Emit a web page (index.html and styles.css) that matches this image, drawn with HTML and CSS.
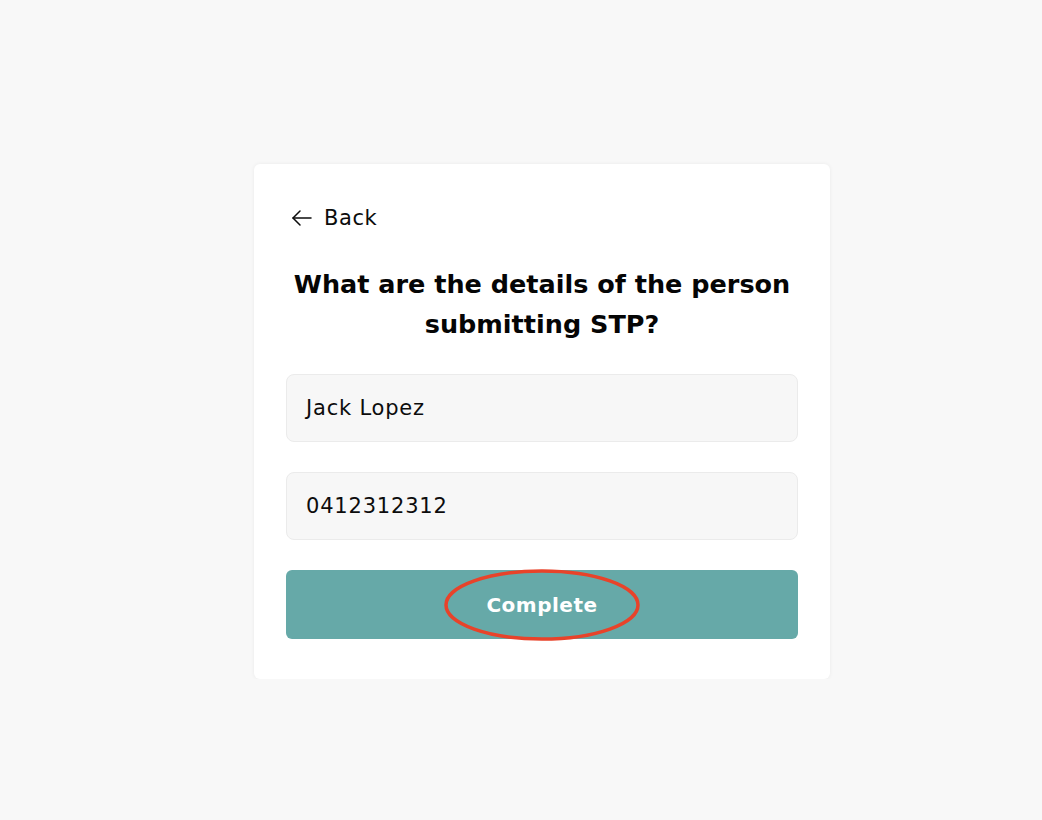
FILE: index.html
```html
<!DOCTYPE html>
<html lang="en">
<head>
<meta charset="utf-8">
<title>STP details</title>
<link rel="stylesheet" href="styles.css">
</head>
<body>
<main class="page">
  <section class="card">
    <a class="back" href="#">
      <svg class="back-icon" viewBox="0 0 24 24" width="24" height="24" fill="none" stroke="currentColor" stroke-width="1.5" stroke-linecap="round" stroke-linejoin="round"><path d="M21 12H3"/><path d="M10 5l-7 7 7 7"/></svg>
      <span>Back</span>
    </a>
    <h1 class="title">What are the details of the person submitting STP?</h1>
    <div class="field">Jack Lopez</div>
    <div class="field">0412312312</div>
    <div class="btn-wrap">
      <button class="btn">Complete</button>
      <svg class="annot" viewBox="0 0 200 76" width="200" height="76"><ellipse cx="100" cy="38" rx="96" ry="34" fill="none" stroke="#e8432a" stroke-width="3.5"/></svg>
    </div>
  </section>
</main>
</body>
</html>
```
FILE: styles.css
```css
html, body {
  margin: 0;
  padding: 0;
  background: #f8f8f8;
}
body {
  font-family: "DejaVu Sans", "Noto Sans", sans-serif;
  color: #0c0c0c;
}
.page {
  display: flex;
  justify-content: flex-start;
  padding: 164px 0 0 254px;
}
.card {
  box-sizing: border-box;
  width: 576px;
  background: #ffffff;
  border-radius: 6px;
  box-shadow: 0 0 4px rgba(0,0,0,0.06);
  padding: 40px 32px 40px 32px;
  display: flex;
  flex-direction: column;
}
.back {
  display: flex;
  align-items: center;
  gap: 10px;
  color: #0c0c0c;
  text-decoration: none;
  font-size: 21px;
  line-height: 28px;
  letter-spacing: 0.6px;
  margin-left: 4px;
}
.back-icon {
  display: block;
}
.title {
  margin: 32px 0 30px 0;
  text-align: center;
  font-size: 25.5px;
  line-height: 40px;
  font-weight: 700;
  color: #050505;
}
.field {
  box-sizing: border-box;
  height: 68px;
  background: #f7f7f7;
  border: 1px solid #ebebeb;
  border-radius: 8px;
  padding: 0 19px;
  display: flex;
  align-items: center;
  font-size: 21px;
  letter-spacing: 0.8px;
  margin-bottom: 30px;
}
.btn-wrap {
  position: relative;
}
.btn {
  width: 100%;
  height: 69px;
  border: none;
  border-radius: 6px;
  background: #66a9a8;
  color: #ffffff;
  font-family: inherit;
  font-size: 20px;
  font-weight: 700;
  letter-spacing: 0.5px;
  display: block;
}
.annot {
  position: absolute;
  left: 156px;
  top: -3px;
  pointer-events: none;
}
```
